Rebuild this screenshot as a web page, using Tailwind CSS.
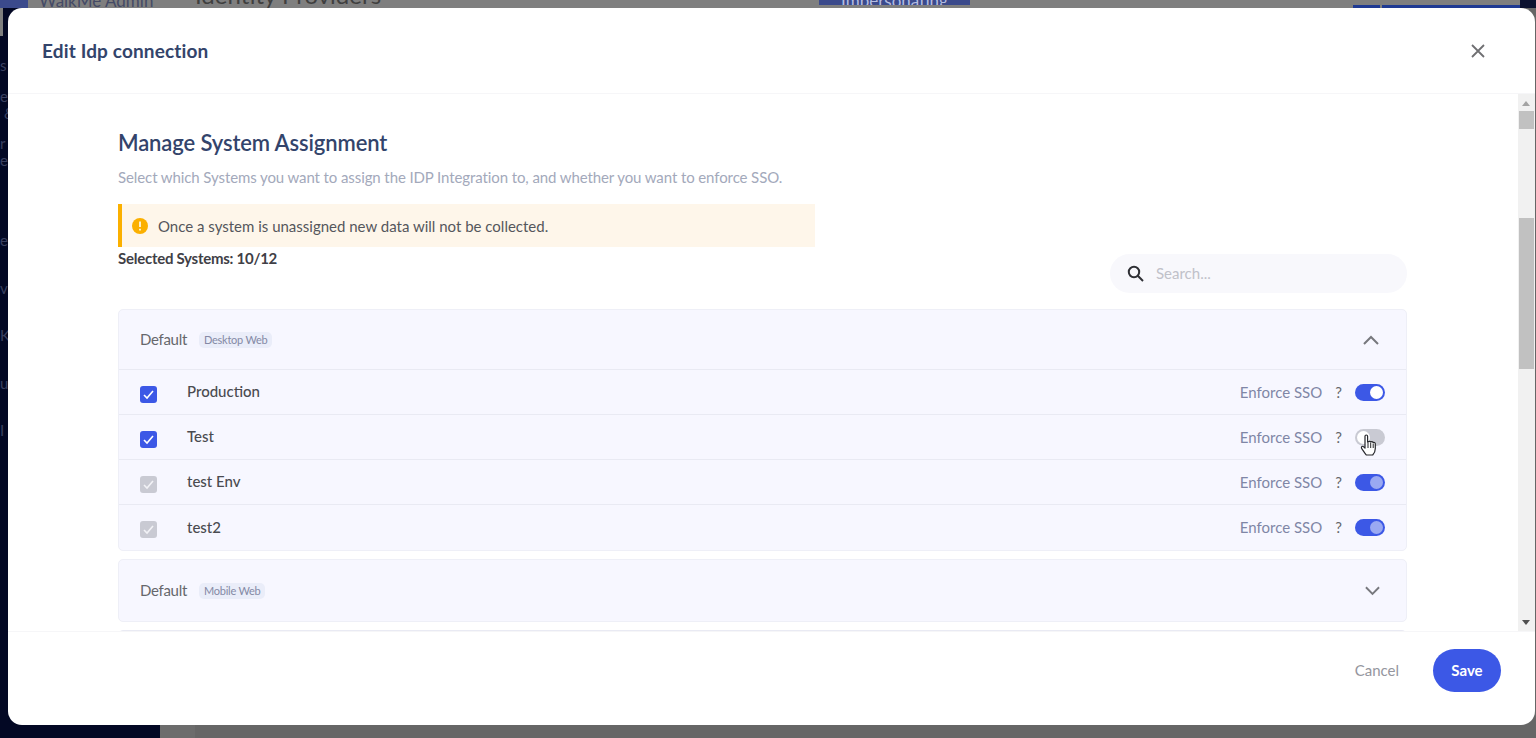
<!DOCTYPE html>
<html lang="en">
<head>
  <meta charset="UTF-8">
  <title>Edit Idp connection</title>
  <script src="https://cdn.jsdelivr.net/npm/@tailwindcss/browser@4"></script>
</head>
<body class="h-[738px] overflow-hidden font-['Lato','Open_Sans',sans-serif]">
  <div class="relative h-[738px] w-[1536px] overflow-hidden bg-[#666666]">
    <!-- page behind the modal -->
    <div class="flex h-full">
      <aside class="flex h-full w-[160px] flex-col bg-[#030824] text-[15px] text-[#3a4060]">
        <div class="flex h-[8px] shrink-0 overflow-hidden bg-[#7f7f7f]">
          <div class="h-[8px] w-[28px] shrink-0 bg-[#3b4a8c]"></div>
          <span class="mt-[-12px] ml-[11px] text-[17px] whitespace-nowrap text-[#444a66]">WalkMe Admin</span>
        </div>
        <div class="h-[28px] w-[3px] shrink-0 bg-[#7f7f7f]"></div>
        <div class="flex flex-col pt-[19px] leading-[20px]">
          <span class="h-[31px]">s</span><span class="h-[17px]">e</span><span class="h-[30px] pl-[4px]">&amp;</span><span class="h-[17px]">r</span><span>e</span>
        </div>
        <div class="flex flex-col gap-[27.5px] pt-[60px] leading-[20px]">
          <span>e</span><span>v</span><span>K</span><span>u</span><span>I</span>
        </div>
      </aside>
      <div class="h-full flex-1">
        <div class="flex h-[8px] items-start overflow-hidden bg-[#7f7f7f] pl-[35px]">
          <span class="mt-[-19px] w-[624px] shrink-0 text-[24px] leading-[28px] whitespace-nowrap text-[#3f3f3f]">Identity Providers</span>
          <div class="h-[5px] w-[151px] shrink-0 overflow-hidden bg-[#3b4a8c] text-center text-[17px] leading-[1px] text-[#b5bde0]">Impersonating</div>
          <div class="mt-[5px] ml-[383px] h-[3px] w-[27px] shrink-0 bg-[#1f3a93]"></div>
          <div class="mt-[5px] ml-[2px] h-[3px] w-[138px] shrink-0 bg-[#1f3a93]"></div>
          <div class="h-[8px] w-[16px] shrink-0 bg-[#0c1230]"></div>
        </div>
        <div class="mt-[717px] h-[13px] w-[35px] bg-[#6c6c6c]"></div>
      </div>
    </div>

    <!-- modal -->
    <div class="absolute top-[8px] left-[8px] flex h-[717px] w-[1527px] flex-col overflow-hidden rounded-[14px] bg-white">
      <header class="flex h-[86px] shrink-0 items-center justify-between border-b border-[#f6f6f8] pr-[50px] pl-[34px]">
        <h1 class="pt-[1px] text-[19px] font-bold tracking-[0.15px] text-[#33446b]">Edit Idp connection</h1>
        <svg class="h-[14px] w-[14px]" viewBox="0 0 14 14" fill="none" stroke="#6f6f72" stroke-width="1.8"><path d="M1 1l12 12M13 1L1 13"/></svg>
      </header>

      <div class="flex min-h-0 flex-1">
        <main class="min-w-0 flex-1 overflow-hidden pt-[34px] pr-[111px] pl-[110px]">
          <h2 class="text-[22px] leading-[30px] font-semibold tracking-[-0.12px] text-[#33446b]">Manage System Assignment</h2>
          <p class="mt-[9px] text-[15px] leading-[20px] tracking-[-0.1px] text-[#a3a9bb]">Select which Systems you want to assign the IDP Integration to, and whether you want to enforce SSO.</p>
          <div class="mt-[17px] flex h-[43px] w-[697px] items-center gap-[10px] border-l-[4px] border-[#fbb000] bg-[#fef6ea] pt-[1px] pl-[10px] text-[15px] text-[#55565c]">
            <svg class="h-[16px] w-[16px]" viewBox="0 0 16 16"><circle cx="8" cy="8" r="8" fill="#fbb000"/><path d="M8 3.5v5.5M8 10.8v1.7" stroke="#fff" stroke-width="1.6"/></svg>
            Once a system is unassigned new data will not be collected.
          </div>
          <div class="flex h-[62px] items-start justify-between">
            <p class="text-[15px] leading-[22px] font-bold tracking-[-0.26px] text-[#3f4046]">Selected Systems: 10/12</p>
            <div class="mt-[7px] flex h-[39px] w-[297px] items-center gap-[12px] rounded-full bg-[#f8f8fc] pl-[17px] text-[15px] text-[#c0c1c9]">
              <svg class="h-[17px] w-[17px]" viewBox="0 0 17 17" fill="none" stroke="#2f3035" stroke-width="2"><circle cx="7" cy="7" r="5.2"/><path d="M10.8 10.8L16 16"/></svg>
              Search...
            </div>
          </div>

          <section class="rounded-[5px] border border-[#eeeff7] bg-[#f7f7ff]">
            <div class="flex h-[60px] items-center justify-between border-b border-[#e9eaf3] pr-[27px] pl-[21px]">
              <div class="flex items-center gap-[12px]">
                <span class="text-[15px] tracking-[-0.3px] text-[#66676c]">Default</span>
                <span class="rounded-[5px] bg-[#eaedf9] px-[5px] text-[11px] leading-[16px] tracking-[-0.25px] text-[#8489a5]">Desktop Web</span>
              </div>
              <svg class="h-[10px] w-[16px]" viewBox="0 0 16 10" fill="none" stroke="#77787d" stroke-width="2"><path d="M1 9l7-7 7 7"/></svg>
            </div>

            <div class="flex h-[45px] items-center border-b border-[#e9eaf3] pr-[21px] pl-[21px]">
              <span class="mt-[4px] flex h-[17px] w-[17px] items-center justify-center rounded-[3px] bg-[#3c58e6]">
                <svg class="h-[11px] w-[11px]" viewBox="0 0 11 11" fill="none" stroke="#fff" stroke-width="1.6"><path d="M1 6l3 3 6-7"/></svg>
              </span>
              <span class="ml-[30px] pb-[2px] text-[15px] font-medium text-[#4a4b50]">Production</span>
              <span class="ml-auto text-[15px] text-[#7f86a6]">Enforce SSO</span>
              <span class="ml-[13px] text-[15px] text-[#66676c]">?</span>
              <span class="ml-[13px] flex h-[17px] w-[30px] items-center justify-end rounded-full bg-[#3c58e6] pr-[2px]"><span class="h-[13px] w-[13px] rounded-full bg-white"></span></span>
            </div>
            <div class="flex h-[45px] items-center border-b border-[#e9eaf3] pr-[21px] pl-[21px]">
              <span class="mt-[4px] flex h-[17px] w-[17px] items-center justify-center rounded-[3px] bg-[#3c58e6]">
                <svg class="h-[11px] w-[11px]" viewBox="0 0 11 11" fill="none" stroke="#fff" stroke-width="1.6"><path d="M1 6l3 3 6-7"/></svg>
              </span>
              <span class="ml-[30px] pb-[2px] text-[15px] font-medium text-[#4a4b50]">Test</span>
              <span class="ml-auto text-[15px] text-[#7f86a6]">Enforce SSO</span>
              <span class="ml-[13px] text-[15px] text-[#66676c]">?</span>
              <span class="relative ml-[13px] flex h-[17px] w-[30px] items-center rounded-full bg-[#c9cad3] pl-[2px]">
                <span class="h-[13px] w-[13px] rounded-full bg-white"></span>
                <svg class="absolute top-[5px] left-[5px] h-[22px] w-[17px]" viewBox="0 0 17 22"><path d="M5 2.2c0-1.6 2.6-1.6 2.6 0v6l.6-.1c.3-1 2.2-1 2.5.1.5-.8 2.1-.7 2.4.4.7-.5 2.2-.1 2.2 1.2v4.7c0 2.6-1.6 5.5-2.6 6.5H6.3c-1-1.500-4.300-5.500-4.800-7-.5-1.400.9-2.300 2-1.300l1.500 1.500z" fill="#fff" stroke="#26272b" stroke-width="1.200" stroke-linejoin="round"/><path d="M8 9v5M10.700 9v5M13.200 9.500v4.500" stroke="#26272b" stroke-width="1"/></svg>
              </span>
            </div>
            <div class="flex h-[45px] items-center border-b border-[#e9eaf3] pr-[21px] pl-[21px]">
              <span class="mt-[4px] flex h-[17px] w-[17px] items-center justify-center rounded-[3px] bg-[#c9cad3]">
                <svg class="h-[11px] w-[11px]" viewBox="0 0 11 11" fill="none" stroke="#f2f2f6" stroke-width="1.6"><path d="M1 6l3 3 6-7"/></svg>
              </span>
              <span class="ml-[30px] pb-[2px] text-[15px] font-medium text-[#4a4b50]">test Env</span>
              <span class="ml-auto text-[15px] text-[#7f86a6]">Enforce SSO</span>
              <span class="ml-[13px] text-[15px] text-[#66676c]">?</span>
              <span class="ml-[13px] flex h-[17px] w-[30px] items-center justify-end rounded-full bg-[#3c58e6] pr-[2px]"><span class="h-[13px] w-[13px] rounded-full bg-[#9aa9f2]"></span></span>
            </div>
            <div class="flex h-[45px] items-center pr-[21px] pl-[21px]">
              <span class="mt-[4px] flex h-[17px] w-[17px] items-center justify-center rounded-[3px] bg-[#c9cad3]">
                <svg class="h-[11px] w-[11px]" viewBox="0 0 11 11" fill="none" stroke="#f2f2f6" stroke-width="1.6"><path d="M1 6l3 3 6-7"/></svg>
              </span>
              <span class="ml-[30px] text-[15px] font-medium text-[#4a4b50]">test2</span>
              <span class="ml-auto text-[15px] text-[#7f86a6]">Enforce SSO</span>
              <span class="ml-[13px] text-[15px] text-[#66676c]">?</span>
              <span class="ml-[13px] flex h-[17px] w-[30px] items-center justify-end rounded-full bg-[#3c58e6] pr-[2px]"><span class="h-[13px] w-[13px] rounded-full bg-[#9aa9f2]"></span></span>
            </div>
          </section>

          <section class="mt-[8px] flex h-[63px] items-center justify-between rounded-[5px] border border-[#eeeff7] bg-[#f7f7ff] pr-[26px] pl-[21px]">
            <div class="flex items-center gap-[12px]">
              <span class="text-[15px] tracking-[-0.3px] text-[#66676c]">Default</span>
              <span class="rounded-[5px] bg-[#eaedf9] px-[5px] text-[11px] leading-[16px] tracking-[-0.25px] text-[#8489a5]">Mobile Web</span>
            </div>
            <svg class="h-[10px] w-[15px]" viewBox="0 0 16 10" fill="none" stroke="#77787d" stroke-width="2"><path d="M1 1l7 7 7-7"/></svg>
          </section>
          <section class="mt-[8px] h-[40px] rounded-[5px] border border-[#e9eaf3] bg-[#fbfbfe]"></section>
        </main>

        <div class="relative flex w-[17px] shrink-0 flex-col items-center bg-[#f1f1f1] pr-[1px]">
          <svg class="mt-[7px] h-[5px] w-[8px]" viewBox="0 0 8 5"><path d="M4 0l4 5H0z" fill="#a3a3a3"/></svg>
          <div class="mt-[5px] h-[18px] w-[15px] bg-[#c1c1c1]"></div>
          <div class="mt-[89px] h-[151px] w-[15px] bg-[#c1c1c1]"></div>
          <svg class="absolute bottom-[6px] h-[5px] w-[8px]" viewBox="0 0 8 5"><path d="M4 5l4-5H0z" fill="#505050"/></svg>
        </div>
      </div>

      <footer class="flex h-[94px] shrink-0 items-center justify-end gap-[34px] border-t border-[#f6f6f8] pr-[34px] pb-[16px]">
        <span class="text-[15px] text-[#95969e]">Cancel</span>
        <button class="h-[43px] w-[68px] rounded-full bg-[#3c58e6] text-[15px] font-bold text-white">Save</button>
      </footer>
    </div>
  </div>
</body>
</html>
